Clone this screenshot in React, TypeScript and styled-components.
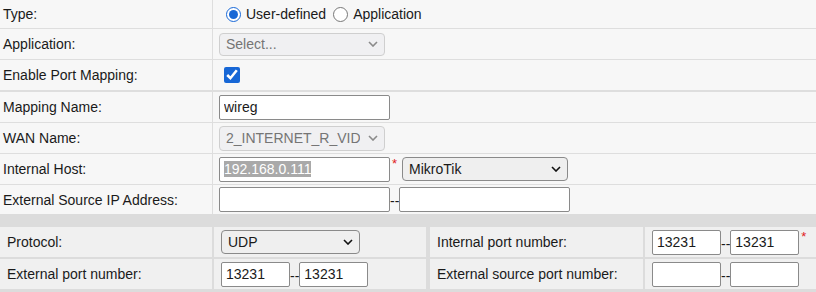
import { FC, ReactNode, useEffect, useRef } from "react";
import styled, { createGlobalStyle, css } from "styled-components";

const GlobalStyle = createGlobalStyle`
  html, body {
    margin: 0;
    padding: 0;
    background: #f7f7f7;
  }
  body {
    font-family: "Liberation Sans", Arial, sans-serif;
    font-size: 14px;
    color: #1a1a1a;
  }
  * {
    box-sizing: border-box;
  }
`;

type SelectPT = {
  width: number;
  height?: number;
  value: string;
  disabled?: boolean;
};

const Select: FC<SelectPT> = ({ width, height = 24, value, disabled }) => (
  <StyledSelectWrap $w={width} $h={height}>
    <StyledSelect disabled={disabled} value={value} onChange={() => {}}>
      <option value={value}>{value}</option>
    </StyledSelect>
    <StyledChevron
      width="10"
      height="6"
      viewBox="0 0 10 6"
      $disabled={!!disabled}
    >
      <path d="M1 1 L5 5 L9 1" fill="none" strokeWidth="1.6" />
    </StyledChevron>
  </StyledSelectWrap>
);

const Range: FC<{ width: number; from?: string; to?: string; required?: boolean }> = ({
  width,
  from = "",
  to = "",
  required,
}) => (
  <StyledInline>
    <StyledInput $w={width} defaultValue={from} />
    <StyledDash>--</StyledDash>
    <StyledInput $w={width} defaultValue={to} />
    {required && <StyledStar>*</StyledStar>}
  </StyledInline>
);

const TopRow: FC<{ label: string; height?: number; thick?: boolean; children?: ReactNode }> = ({
  label,
  height = 30,
  thick,
  children,
}) => (
  <StyledTopRow $h={height} $thick={!!thick}>
    <StyledTopLabel>{label}</StyledTopLabel>
    <StyledTopValue>{children}</StyledTopValue>
  </StyledTopRow>
);

export default function App() {
  const hostRef = useRef<HTMLInputElement>(null);

  useEffect(() => {
    const el = hostRef.current;
    if (el) {
      el.focus();
      el.setSelectionRange(0, el.value.length);
    }
  }, []);

  return (
    <>
      <GlobalStyle />
      <StyledPage>
        <section>
          <TopRow label="Type:" height={28}>
            <StyledChoice>
              <StyledRadio type="radio" name="type" defaultChecked />
              User-defined
            </StyledChoice>
            <StyledChoice>
              <StyledRadio type="radio" name="type" />
              Application
            </StyledChoice>
          </TopRow>
          <TopRow label="Application:">
            <Select width={166} height={23} value="Select..." disabled />
          </TopRow>
          <TopRow label="Enable Port Mapping:" thick>
            <StyledCheckbox type="checkbox" defaultChecked />
          </TopRow>
          <TopRow label="Mapping Name:">
            <StyledInput $w={171} defaultValue="wireg" />
          </TopRow>
          <TopRow label="WAN Name:">
            <Select width={166} height={25} value="2_INTERNET_R_VID_100" disabled />
          </TopRow>
          <TopRow label="Internal Host:">
            <StyledInline>
              <StyledHostInput ref={hostRef} $w={171} defaultValue="192.168.0.111" />
              <StyledStar $gap>*</StyledStar>
              <Select width={166} value="MikroTik" />
            </StyledInline>
          </TopRow>
          <TopRow label="External Source IP Address:" height={29}>
            <Range width={171} />
          </TopRow>
        </section>

        <StyledPorts>
          <StyledPortCell $label>Protocol:</StyledPortCell>
          <StyledPortCell $narrow>
            <Select width={139} value="UDP" />
          </StyledPortCell>
          <StyledPortCell $label>Internal port number:</StyledPortCell>
          <StyledPortCell>
            <Range width={69} from="13231" to="13231" required />
          </StyledPortCell>

          <StyledPortCell $label>External port number:</StyledPortCell>
          <StyledPortCell $narrow>
            <Range width={69} from="13231" to="13231" />
          </StyledPortCell>
          <StyledPortCell $label>External source port number:</StyledPortCell>
          <StyledPortCell>
            <Range width={69} />
          </StyledPortCell>
        </StyledPorts>
      </StyledPage>
    </>
  );
}

const StyledPage = styled.div`
  width: 816px;
  background: #f7f7f7;
`;

const StyledTopRow = styled.div<{ $h: number; $thick: boolean }>`
  display: grid;
  grid-template-columns: 213px 1fr;
  height: ${(props) => props.$h + 1}px;
  border-bottom: 1px solid #dedede;
  ${(props) =>
    props.$thick &&
    css`
      height: ${props.$h + 2}px;
      border-bottom-width: 2px;
    `}
  &:last-child {
    border-bottom: none;
    height: ${(props) => props.$h}px;
  }
`;

const StyledTopLabel = styled.div`
  display: flex;
  align-items: center;
  padding-left: 3px;
  border-right: 1px solid #dedede;
`;

const StyledTopValue = styled.div`
  display: flex;
  align-items: center;
  padding-left: 6px;
`;

const StyledPorts = styled.div`
  display: grid;
  grid-template-columns: 212px 214px 213px 1fr;
  grid-auto-rows: 30px;
  gap: 2px;
  padding: 13px 0 3px;
  background: #dcdcdc;
`;

const StyledPortCell = styled.div<{ $label?: boolean; $narrow?: boolean }>`
  display: flex;
  align-items: center;
  padding-left: 7px;
  background: #f0f0f0;
  ${(props) =>
    props.$narrow &&
    css`
      margin-right: 2px;
    `}
`;

const StyledInline = styled.div`
  display: flex;
  align-items: center;
`;

const StyledInput = styled.input<{ $w: number }>`
  width: ${(props) => props.$w}px;
  height: 25px;
  padding: 1px 4px;
  border: 1px solid #8a8a8a;
  border-radius: 2px;
  background: #fff;
  font-family: inherit;
  font-size: 14px;
  color: #1a1a1a;
  outline: none;
`;

const StyledHostInput = styled(StyledInput)`
  &::selection {
    background: #a9a9a9;
    color: #fff;
  }
`;

const StyledDash = styled.span`
  align-self: flex-end;
  padding-bottom: 4px;
  line-height: 1;
`;

const StyledStar = styled.span<{ $gap?: boolean }>`
  align-self: flex-start;
  margin: 0 ${(props) => (props.$gap ? "5px" : "0")} 0 2px;
  color: #e02020;
  font-size: 13px;
  line-height: 1;
`;

const StyledSelectWrap = styled.div<{ $w: number; $h: number }>`
  position: relative;
  width: ${(props) => props.$w}px;
  height: ${(props) => props.$h}px;
`;

const StyledSelect = styled.select`
  appearance: none;
  width: 100%;
  height: 100%;
  padding: 0 24px 0 6px;
  border: 1px solid #8a8a8a;
  border-radius: 4px;
  background: #efefef;
  font-family: inherit;
  font-size: 14px;
  color: #1a1a1a;
  outline: none;
  &:disabled {
    border-color: #cfcfcf;
    background: #f0f0f2;
    color: #757575;
    opacity: 1;
  }
`;

const StyledChevron = styled.svg<{ $disabled: boolean }>`
  position: absolute;
  right: 7px;
  top: 50%;
  margin-top: -3px;
  pointer-events: none;
  stroke: ${(props) => (props.$disabled ? "#8a8a8a" : "#111")};
`;

const StyledChoice = styled.label`
  display: inline-flex;
  align-items: center;
`;

const StyledRadio = styled.input`
  width: 15px;
  height: 15px;
  margin: 0 5px 0 7px;
  accent-color: #1767d6;
`;

const StyledCheckbox = styled.input`
  width: 16px;
  height: 16px;
  margin: 0 0 0 5px;
  accent-color: #1767d6;
`;
